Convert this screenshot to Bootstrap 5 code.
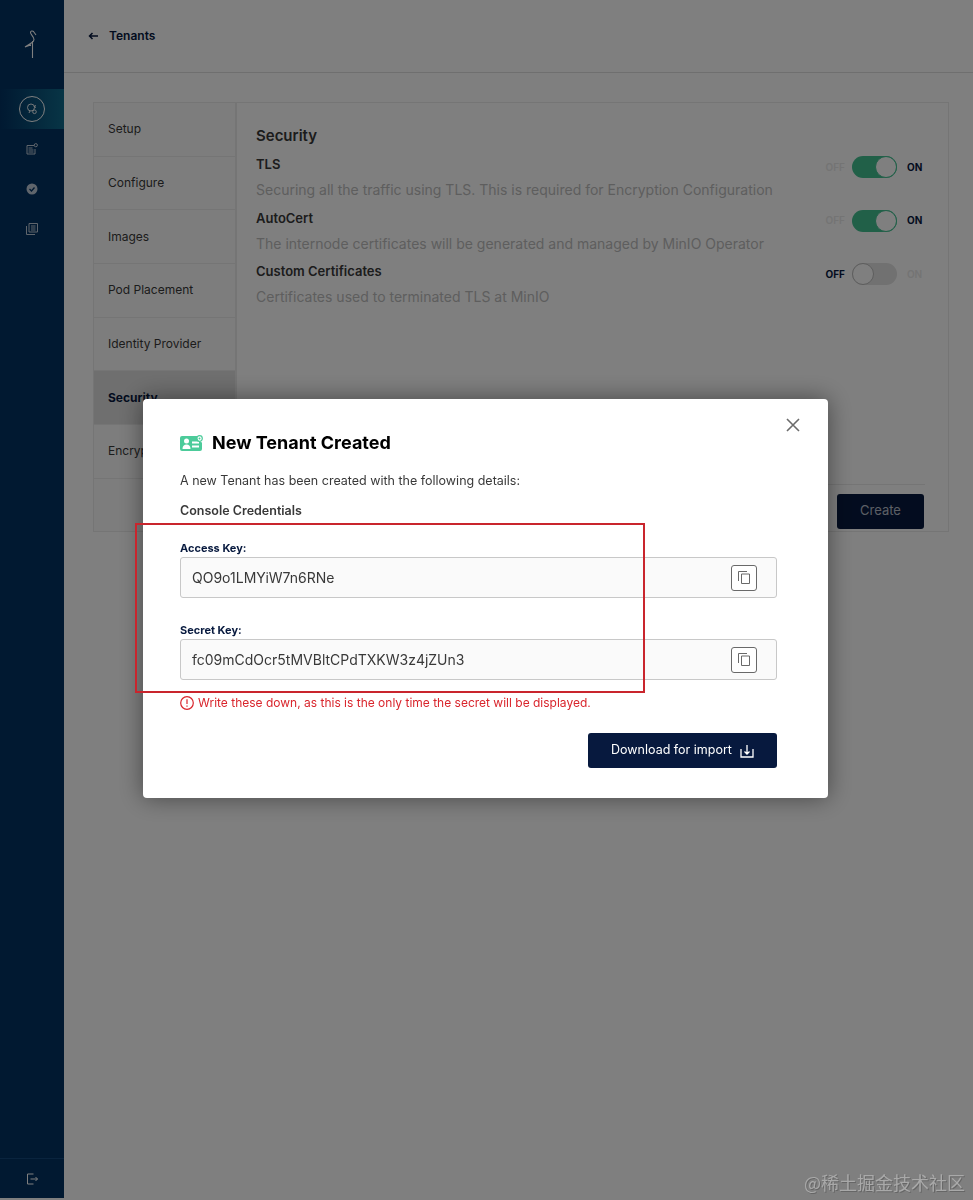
<!DOCTYPE html>
<html lang="en">
<head>
<meta charset="utf-8">
<title>New Tenant Created</title>
<link rel="stylesheet" href="https://cdn.jsdelivr.net/npm/bootstrap@5.3.0/dist/css/bootstrap.min.css">
<style>
html,body{height:1198px;overflow:hidden}
body{font-family:Inter,"Liberation Sans",sans-serif;background:#fff;color:#07193e}
.app-shell{height:1198px}
.side-rail{width:64px;flex:none;background:#023263;color:#fff}
.rail-logo{height:89px}
.rail-item{height:40px;opacity:.75}
.rail-item.active-item{background:linear-gradient(90deg,#023263,#0f6a8c);opacity:1}
.rail-ring{width:26px;height:26px;border:1px solid #fff;border-radius:50%}
.rail-foot{height:40px;border-top:1px solid #14487c}
.main-area{min-width:0}
.top-bar{height:73px;border-bottom:1px solid #dedede;padding-left:24px;gap:11px;font-size:12px;font-weight:600;color:#07193e}
.wizard-box{margin:29px 24px 0 29px;height:430px;border:1px solid #eaeaea}
.step-col{width:143px;flex:none;border-right:1px solid #eaeaea;background:#fbfbfb}
.step-item{height:53.7px;padding-left:14px;font-size:12px;color:#393939;border-bottom:1px solid #eaeaea;box-shadow:inset -1px 0 0 #eaeaea}
.step-item.current-step{background:#dedede;font-weight:700;color:#07193e}
.panel-body{padding:24px 20px 0 19px;min-width:0}
.panel-title{font-size:15px;font-weight:600;color:#393939;margin-bottom:11px;line-height:18px}
.opt-row{height:53.5px}
.opt-name{font-size:13px;font-weight:600;color:#393939;line-height:16px}
.opt-desc{font-size:14px;color:#bcbcbc;line-height:17px;margin-top:9px}
.switch-group{width:99px;margin-right:4px;gap:7px;font-size:10px;font-weight:700;color:#07193e;height:22px}
.switch-label{width:21px;text-align:right}
.switch-label.right-label{text-align:left;width:18px;margin-left:3px}
.switch-label.dim-label{color:#e8e8e8;font-weight:600}
.toggle-track{width:45px;height:22px;border-radius:11px;background:#42c091;position:relative;flex:none}
.toggle-track::after{content:"";position:absolute;right:0;top:0;width:22px;height:22px;border-radius:50%;background:#fff;border:1px solid #42c091}
.toggle-track.off-track{background:#e2e2e2}
.toggle-track.off-track::after{left:0;right:auto;border-color:#bbb}
.panel-foot{margin-top:167px;height:53px;margin-left:-1px;margin-right:3px;border-top:1px solid #eaeaea;gap:9px;padding-top:9px}
.ghost-btn,.create-btn{height:35px;border-radius:3px;font-size:13px}
.ghost-btn{width:87px;background:#fff;border:1px solid #07193e}
.create-btn{width:87px;margin-right:1px;background:#07193e;color:#b9bfca;border:0}
.modal-backdrop.show{opacity:.5}
.tenant-dialog{max-width:685px;width:685px;margin:399px 0 0 143px}
.tenant-sheet{height:399px;border:0;border-radius:4px;box-shadow:0 0 24px rgba(0,0,0,.45);padding:35px 51px 0 37px;position:relative}
.dismiss-x{position:absolute;top:18px;right:27px;width:16px;height:16px;background:none;border:0;padding:0;line-height:0}
.sheet-title{font-size:18px;font-weight:700;color:#000;margin:0;gap:9px;line-height:18px}
.sheet-intro{font-size:12.5px;color:#393939;margin:21px 0 0;line-height:16px}
.cred-head{font-size:12.5px;font-weight:600;color:#393939;margin:14px 0 0;line-height:16px}
.key-label{font-size:11px;font-weight:700;color:#07193e;line-height:13px;display:block;margin:0 0 2px}
.first-key{margin-top:23px}
.second-key{margin-top:26px}
.key-field{height:41px;border:1px solid #c8c8c8;border-radius:3px;background:#fafafa;padding:0 19px 0 11px;font-size:14px;color:#393939}
.copy-btn{width:26px;height:26px;border:1px solid #696969;border-radius:3px;background:#fff;padding:0;line-height:0}
.warn-line{font-size:12px;color:#d9252c;margin-top:15px;gap:4px;line-height:16px}
.dl-btn{width:189px;height:35px;margin-top:22px;background:#07193e;color:#fff;border:0;border-radius:3px;font-size:12.5px;gap:8px}
.mark-box{position:absolute;left:-8px;top:124px;width:510px;height:170px;border:2px solid #c9252d;pointer-events:none}
.stamp{position:fixed;right:8px;bottom:6px;z-index:1060;font-family:"Noto Sans CJK SC","Noto Sans",sans-serif;font-size:18px;color:#a9a9a9;line-height:24px;text-shadow:1px 1px 0 #666;white-space:nowrap}
</style>
</head>
<body>
<div class="d-flex app-shell">
  <aside class="side-rail d-flex flex-column">
    <div class="rail-logo d-flex align-items-center justify-content-center">
      <svg width="16" height="30" viewBox="0 0 16 30" fill="none" stroke="#fff" stroke-width="1.1"><path d="M12 5 9.5 1.5C8.5.5 6.500 1 6.500 2.500c0 2 3.500 4 3.500 7 0 2.500-2.500 3-3.500 4L1 17l5.500-2v1M8.500 11v17"/></svg>
    </div>
    <div class="rail-item active-item d-flex align-items-center justify-content-center">
      <div class="rail-ring d-flex align-items-center justify-content-center">
        <svg width="12" height="12" viewBox="0 0 12 12" fill="none" stroke="#fff" stroke-width=".9"><circle cx="5" cy="4.500" r="3.500"/><circle cx="8.500" cy="8.800" r="1.800"/><path d="M3 10l1-2M10 2.500l-2 1 2 1"/></svg>
      </div>
    </div>
    <div class="rail-item d-flex align-items-center justify-content-center">
      <svg width="12" height="12" viewBox="0 0 12 12" fill="none" stroke="#fff"><path d="M8 2.500H1v8.500h8V6M2.500 5h4M2.500 7h5M2.500 9h5"/><circle cx="9.800" cy="2.200" r="1.600"/></svg>
    </div>
    <div class="rail-item d-flex align-items-center justify-content-center">
      <svg width="12" height="12" viewBox="0 0 12 12"><circle cx="6" cy="6" r="5.500" fill="#fff"/><path d="M3.500 6l2 2 3-3.500" fill="none" stroke="#023263" stroke-width="1.300"/></svg>
    </div>
    <div class="rail-item d-flex align-items-center justify-content-center">
      <svg width="12" height="12" viewBox="0 0 12 12" fill="none" stroke="#fff"><path d="M3 .5h8.500v8.500H3zM.5 3v8.500H9M5 3h4.500M5 5h4.500M5 7h4.500"/></svg>
    </div>
    <div class="rail-foot mt-auto d-flex align-items-center justify-content-center">
      <svg width="12" height="12" viewBox="0 0 12 12" fill="none" stroke="#fff"><path d="M7.500 1H1.500v10h6M4.500 6h7M9.500 4l2 2-2 2"/></svg>
    </div>
  </aside>
  <main class="main-area flex-grow-1">
    <div class="top-bar d-flex align-items-center">
      <svg width="10" height="8" viewBox="0 0 10 8" fill="none" stroke="#07193e" stroke-width="1.500"><path d="M10 4H1.500M4.500 1 1.500 4l3 3"/></svg>
      <span>Tenants</span>
    </div>
    <div class="wizard-box d-flex">
      <div class="step-col">
        <div class="step-item d-flex align-items-center">Setup</div>
        <div class="step-item d-flex align-items-center">Configure</div>
        <div class="step-item d-flex align-items-center">Images</div>
        <div class="step-item d-flex align-items-center">Pod Placement</div>
        <div class="step-item d-flex align-items-center">Identity Provider</div>
        <div class="step-item current-step d-flex align-items-center">Security</div>
        <div class="step-item d-flex align-items-center">Encryption</div>
      </div>
      <div class="panel-body flex-grow-1">
        <div class="panel-title">Security</div>
        <div class="opt-row d-flex justify-content-between">
          <div><div class="opt-name">TLS</div><div class="opt-desc">Securing all the traffic using TLS. This is required for Encryption Configuration</div></div>
          <div class="switch-group d-flex align-items-center flex-none"><span class="switch-label dim-label">OFF</span><span class="toggle-track"></span><span class="switch-label right-label">ON</span></div>
        </div>
        <div class="opt-row d-flex justify-content-between">
          <div><div class="opt-name">AutoCert</div><div class="opt-desc">The internode certificates will be generated and managed by MinIO Operator</div></div>
          <div class="switch-group d-flex align-items-center"><span class="switch-label dim-label">OFF</span><span class="toggle-track"></span><span class="switch-label right-label">ON</span></div>
        </div>
        <div class="opt-row d-flex justify-content-between">
          <div><div class="opt-name">Custom Certificates</div><div class="opt-desc">Certificates used to terminated TLS at MinIO</div></div>
          <div class="switch-group d-flex align-items-center"><span class="switch-label">OFF</span><span class="toggle-track off-track"></span><span class="switch-label right-label dim-label">ON</span></div>
        </div>
        <div class="panel-foot d-flex justify-content-end">
          <button class="ghost-btn" type="button">Back</button>
          <button class="create-btn" type="button">Create</button>
        </div>
      </div>
    </div>
  </main>
</div>

<div class="modal-backdrop fade show"></div>
<div class="modal d-block" role="dialog" aria-modal="true">
  <div class="modal-dialog tenant-dialog">
    <div class="modal-content tenant-sheet">
      <button class="dismiss-x" type="button" aria-label="Close">
        <svg width="14" height="14" viewBox="0 0 14 14" fill="none" stroke="#6b6b6b" stroke-width="1.600"><path d="M1 1l12 12M13 1 1 13"/></svg>
      </button>
      <h2 class="sheet-title d-flex align-items-center">
        <svg width="23" height="16" viewBox="0 0 23 16"><path d="M2 1h15.500a5 5 0 0 0 4.500 6.500V14a2 2 0 0 1-2 2H2a2 2 0 0 1-2-2V3a2 2 0 0 1 2-2z" fill="#4ccb9a"/><circle cx="6.500" cy="6" r="2.500" fill="#fff"/><path d="M2.500 14c0-3 1.500-4.500 4-4.500s4 1.500 4 4.500z" fill="#fff"/><path d="M12 6.500h7v2h-7zM12 10.500h7v2h-7z" fill="#fff"/><circle cx="19.500" cy="3.500" r="2.800" fill="none" stroke="#4ccb9a" stroke-width="1.200"/><circle cx="19.500" cy="3.500" r="1" fill="#4ccb9a"/></svg>
        <span>New Tenant Created</span>
      </h2>
      <p class="sheet-intro">A new Tenant has been created with the following details:</p>
      <p class="cred-head">Console Credentials</p>
      <div class="first-key">
        <label class="key-label">Access Key:</label>
        <div class="key-field d-flex align-items-center justify-content-between">
          <span>QO9o1LMYiW7n6RNe</span>
          <button class="copy-btn d-flex align-items-center justify-content-center" type="button" aria-label="Copy">
            <svg width="12" height="13" viewBox="0 0 12 13" fill="none" stroke="#696969"><path d="M3.500 3h8v9.500h-8z"/><path d="M9 .5H.5V10"/></svg>
          </button>
        </div>
      </div>
      <div class="second-key">
        <label class="key-label">Secret Key:</label>
        <div class="key-field d-flex align-items-center justify-content-between">
          <span>fc09mCdOcr5tMVBltCPdTXKW3z4jZUn3</span>
          <button class="copy-btn d-flex align-items-center justify-content-center" type="button" aria-label="Copy">
            <svg width="12" height="13" viewBox="0 0 12 13" fill="none" stroke="#696969"><path d="M3.500 3h8v9.500h-8z"/><path d="M9 .5H.5V10"/></svg>
          </button>
        </div>
      </div>
      <div class="warn-line d-flex align-items-center">
        <svg width="14" height="14" viewBox="0 0 14 14" fill="none" stroke="#d9252c" stroke-width="1.200"><circle cx="7" cy="7" r="6.300"/><path d="M7 3.300v4.800M7 9.500v1.300"/></svg>
        <span>Write these down, as this is the only time the secret will be displayed.</span>
      </div>
      <div class="d-flex justify-content-end">
        <button class="dl-btn d-flex align-items-center justify-content-center" type="button">
          <span>Download for import</span>
          <svg width="14" height="14" viewBox="0 0 14 14" fill="none" stroke="#fff" stroke-width="1.300"><path d="M1 5v8h12V5M7 1v9M4.500 7.500 7 10l2.500-2.500"/></svg>
        </button>
      </div>
      <div class="mark-box"></div>
    </div>
  </div>
</div>
<div class="stamp">@稀土掘金技术社区</div>
</body>
</html>
